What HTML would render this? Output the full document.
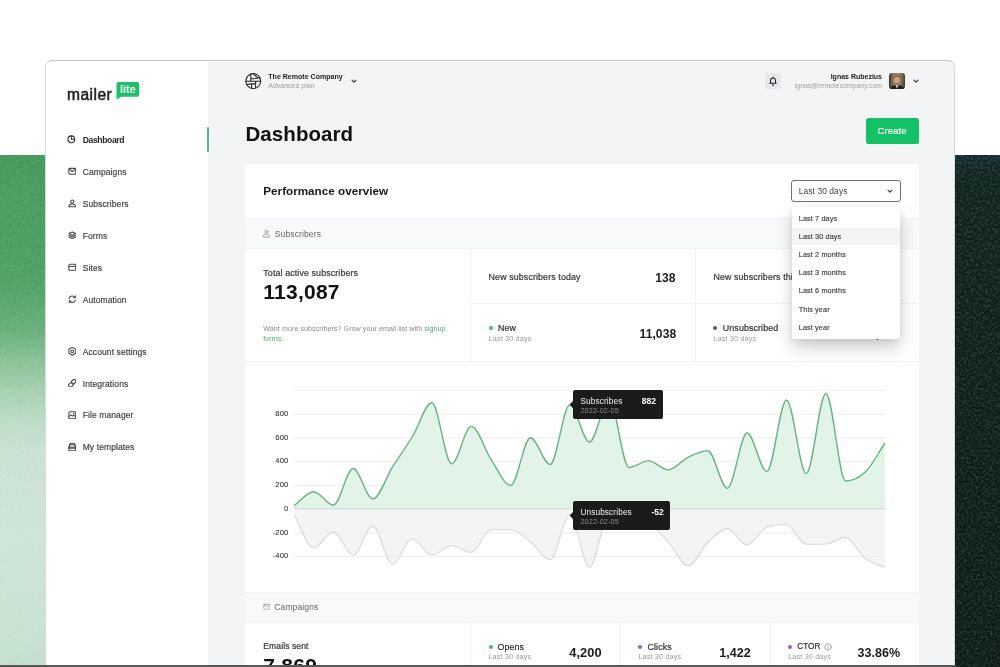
<!DOCTYPE html>
<html lang="en">
<head>
<meta charset="utf-8">
<title>Dashboard</title>
<style>
*{box-sizing:border-box;margin:0;padding:0}
html,body{width:1000px;height:667px;overflow:hidden;background:#fff}
body{position:relative;font-family:"Liberation Sans",sans-serif;color:#111;-webkit-font-smoothing:antialiased}
#root{position:absolute;left:0;top:0;width:1000px;height:667px;will-change:transform}
.abs{position:absolute}
.t{position:absolute;white-space:nowrap;line-height:1}
.b{font-weight:bold}
/* backgrounds */
#bgl{left:0;top:154.7px;width:60px;height:513px;background:linear-gradient(180deg,#41985a 0%,#4c9f63 24.5%,#66ae78 34%,#86c093 40%,#a3d0ae 46%,#bcdcc5 52%,#c9e1d1 58%,#cde4d6 75%,#c4e0cd 100%)}
#bgr{left:940px;top:154.7px;width:60px;height:513px;background:linear-gradient(180deg,#112a2b 0%,#0e201b 6%,#0c1b16 100%)}
#win{left:45px;top:60px;width:910px;height:620px;background:#f3f4f6;border:1px solid #d9d9dc;border-top-color:#c6c6c9;border-radius:6.5px;overflow:hidden}
#side{left:0;top:0;width:162px;height:620px;background:#fff}
#bline{left:0;top:665.4px;width:956px;height:1.6px;background:#565656}
/* sidebar */
.nav{position:absolute;left:82.7px;font-size:8.5px;line-height:12px;height:12px;color:#3d3d3d;white-space:nowrap;letter-spacing:.1px;-webkit-text-stroke:.16px #3d3d3d}
.nav.on{font-weight:bold;color:#262626;font-size:8.6px;margin-top:-.6px;letter-spacing:-.38px;-webkit-text-stroke:0}
.ico{position:absolute;left:67.55px;width:8.6px;height:8.6px;margin-top:.2px;fill:none;stroke:#454545;stroke-width:1.2;stroke-linecap:round;stroke-linejoin:round}
#actbar{left:207px;top:127.2px;width:1.5px;height:24.8px;background:#57b98b;border-radius:1px}

/* header */
#bell{left:764.9px;top:73px;width:16px;height:16px;background:#e6e8ec;border-radius:2.5px}
#avatar{left:889px;top:73px;width:16px;height:16px;border-radius:3px;overflow:hidden}
#create{left:865.6px;top:117.6px;width:53px;height:26.2px;background:#14c166;border-radius:2.5px;color:#effff6;font-size:9.5px;line-height:26.6px;text-align:center;letter-spacing:.12px;-webkit-text-stroke:.22px #effff6}
/* card */
#card{left:245px;top:163.5px;width:674px;height:520px;background:#fff;border-radius:4px 4px 0 0}
.band{position:absolute;left:245px;width:674px;background:#f8f9fb;border-top:1px solid #f1f2f5;border-bottom:1px solid #f1f2f5}
.vl{position:absolute;width:1px;background:#f0f1f3}
.hl{position:absolute;height:1px;background:#f0f1f3}
.lbl{font-size:8.85px;color:#3a3a3a;letter-spacing:.12px;-webkit-text-stroke:.22px #3a3a3a}
.sub{font-size:7.25px;color:#9a9a9a;letter-spacing:.15px}
.num{font-size:12.1px;font-weight:bold;color:#1c1c1c;letter-spacing:.05px}
.dot{position:absolute;width:4px;height:4px;border-radius:50%}
#sel{left:791px;top:180.1px;width:109.8px;height:21.8px;border:1px solid #6f6f6f;border-radius:3px;background:#fff}
#dd{left:792.2px;top:207px;width:107.8px;height:131.5px;background:#fff;border-radius:2px;box-shadow:0 9px 18px rgba(0,0,0,.19),0 2px 6px rgba(0,0,0,.07)}
.opt{position:absolute;left:6.6px;font-size:7.25px;line-height:10px;color:#3d3d3d;white-space:nowrap;letter-spacing:.12px;-webkit-text-stroke:.15px #3d3d3d}
.tip{background:#1b1b1b;border-radius:2px}
</style>
</head>
<body>
<div id="root">
<div id="bgl" class="abs"></div>
<div id="bgr" class="abs"></div>
<svg class="abs" style="left:0;top:154.7px" width="1000" height="513" viewBox="0 0 1000 513"><defs>
<filter id="nd" x="0" y="0" width="100%" height="100%"><feTurbulence type="fractalNoise" baseFrequency="0.42" numOctaves="2" seed="7"/><feColorMatrix type="matrix" values="0 0 0 0 0.27  0 0 0 0 0.38  0 0 0 0 0.34  2.0 0 0 0 -0.8"/></filter>
<filter id="nl" x="0" y="0" width="100%" height="100%"><feTurbulence type="fractalNoise" baseFrequency="1.1" numOctaves="2" seed="11"/><feColorMatrix type="matrix" values="0 0 0 0 1  0 0 0 0 1  0 0 0 0 1  1.4 0 0 0 -0.6"/></filter></defs>
<rect x="955" y="0" width="45" height="513" filter="url(#nd)" opacity=".3"/><rect x="0" y="0" width="46" height="513" filter="url(#nl)" opacity=".28"/></svg>
<div id="win" class="abs"><div id="side" class="abs"></div></div>

<!-- SIDEBAR -->
<div id="sidebar">
<div class="t" id="logo" style="left:67px;top:85.1px;font-size:15.6px;line-height:20px;color:#1d1d1d;letter-spacing:.45px;-webkit-text-stroke:.5px #1b1b1b">mailer</div>
<svg class="abs" id="lite" style="left:116px;top:81px" width="25" height="19" viewBox="0 0 25 19"><path d="M2.2 1H21.4a1.8 1.8 0 0 1 1.8 1.8V13.9a1.8 1.8 0 0 1-1.8 1.8H5.4L0.5 18.6V2.8A1.8 1.8 0 0 1 2.2 1z" fill="#1fc06a"/><text x="3.9" y="12.2" font-family="Liberation Sans, sans-serif" font-size="10.8" font-weight="bold" fill="#f4fff8" letter-spacing=".1">lite</text></svg>
<div id="actbar" class="abs"></div>
<svg class="ico" style="top:135.0px;left:67.3px;stroke:#2e2e2e" viewBox="0 0 10 10"><circle cx="5" cy="5" r="4"/><path d="M5 1V5H9"/></svg>
<svg class="ico" style="top:167.15px" viewBox="0 0 10 10"><rect x="1" y="1.6" width="8" height="6.8" rx="1.1"/><path d="M1.4 2.4L5 5.2L8.6 2.4"/></svg>
<svg class="ico" style="top:199.10px" viewBox="0 0 10 10"><circle cx="5" cy="3" r="1.95"/><path d="M1 9C1 6.5 2.8 5.9 5 5.9S9 6.5 9 9Z"/></svg>
<svg class="ico" style="top:230.80px" viewBox="0 0 10 10"><path d="M5 1.1L9 3L5 4.9L1 3ZM1 5L5 6.9L9 5M1 7L5 8.9L9 7"/></svg>
<svg class="ico" style="top:262.80px" viewBox="0 0 10 10"><rect x="1" y="1.5" width="8" height="7" rx="1.1"/><path d="M1 4H9"/></svg>
<svg class="ico" style="top:294.60px" viewBox="0 0 10 10"><path d="M1.3 4.3A3.8 3.8 0 0 1 8.2 2.9M8.7 5.7A3.8 3.8 0 0 1 1.8 7.1"/><path d="M8.8 0.9V3.4H6.3ZM1.2 9.1V6.6H3.7Z" fill="#444" stroke-width=".5"/></svg>
<svg class="ico" style="top:346.95px" viewBox="0 0 10 10"><path d="M5 0.4L9 2.7V7.3L5 9.6L1 7.3V2.7Z"/><circle cx="5" cy="5" r="1.55"/></svg>
<svg class="ico" style="top:378.60px" viewBox="0 0 10 10"><g transform="rotate(-40 5 5)" stroke-width="1.3"><rect x="-0.3" y="3.3" width="5.7" height="4.2" rx="2.1"/><rect x="4.6" y="2.5" width="5.7" height="4.2" rx="2.1"/></g></svg>
<svg class="ico" style="top:410.65px" viewBox="0 0 10 10"><rect x="1" y="0.9" width="8" height="8.2" rx="1.1"/><path d="M1.2 6.3L3.4 4.4L5.2 5.9L6.6 5.1L8.8 6.4"/><circle cx="6.7" cy="3.2" r=".4"/></svg>
<svg class="ico" style="top:442.65px" viewBox="0 0 10 10"><path d="M3.4 0.9H6.6Q7.7 0.9 8 2L9 5.8H1L2 2Q2.3 0.9 3.4 0.9Z" fill="#c4c4c4"/><path d="M3.4 0.9H6.6Q7.7 0.9 8 2L9 5.8V8.3Q9 9.1 8.2 9.1H1.8Q1 9.1 1 8.3V5.8L2 2Q2.3 0.9 3.4 0.9ZM1 5.8H9"/></svg>
<div class="nav on" style="top:134.5px">Dashboard</div>
<div class="nav" style="top:166.3px">Campaigns</div>
<div class="nav" style="top:198.1px">Subscribers</div>
<div class="nav" style="top:229.9px">Forms</div>
<div class="nav" style="top:261.7px">Sites</div>
<div class="nav" style="top:293.5px">Automation</div>
<div class="nav" style="top:345.7px">Account settings</div>
<div class="nav" style="top:377.5px">Integrations</div>
<div class="nav" style="top:409.3px">File manager</div>
<div class="nav" style="top:441.1px">My templates</div>
</div>


<!-- HEADER -->
<svg class="abs" id="globe" style="left:245px;top:73px" width="17" height="17" viewBox="0 0 17 17" fill="none" stroke="#222" stroke-width="1.05" stroke-linecap="round"><circle cx="8.25" cy="8.05" r="7.45"/><path d="M0.9 8.3H15.6M5.8 1.3V8.3M5.8 5.7Q11 5.7 15 4.7M8.8 1.2L12.6 4.9M10.6 8.3V15M1.8 11.6Q6 10.6 10.6 10.6M6.7 10.9V15.3"/></svg>
<div class="t b" style="left:268.3px;top:73.2px;font-size:7.05px;line-height:8px;color:#222">The Remote Company</div>
<div class="t" style="left:268.3px;top:82.4px;font-size:6.9px;line-height:8px;color:#9b9b9b;letter-spacing:.05px">Advanced plan</div>
<svg class="abs" style="left:350.5px;top:78.9px" width="6" height="5" viewBox="0 0 6 5" fill="none" stroke="#333" stroke-width="1.15" stroke-linecap="round" stroke-linejoin="round"><path d="M1 1.2L3 3.2L5 1.2"/></svg>
<div id="bell" class="abs"><svg width="16" height="16" viewBox="0 0 16 16" fill="none" stroke="#1f1f1f" stroke-width="1.05" stroke-linecap="round" stroke-linejoin="round"><path d="M5.5 10.3V7.5a2.5 2.5 0 0 1 5 0v2.8zM4.7 10.3H11.3M8 4.9V4.1"/><path d="M7.5 12.1h1" stroke-width="1.2"/></svg></div>
<div class="t b" style="right:118px;top:73px;font-size:7px;line-height:8px;color:#222">Ignas Rubezius</div>
<div class="t" style="right:118px;top:82px;font-size:6.85px;line-height:8px;color:#a0a0a0;letter-spacing:.02px">ignas@remotecompany.com</div>
<div id="avatar" class="abs"><svg width="16" height="16" viewBox="0 0 16 16"><defs><linearGradient id="avg" x1="0" x2="1" y1="0" y2="0"><stop offset="0" stop-color="#332d20"/><stop offset=".2" stop-color="#7d705a"/><stop offset=".5" stop-color="#9a8c74"/><stop offset=".8" stop-color="#7d705a"/><stop offset="1" stop-color="#3d3626"/></linearGradient></defs><rect width="16" height="16" fill="url(#avg)"/><ellipse cx="8" cy="4.9" rx="3.5" ry="3" fill="#9a683f"/><ellipse cx="8" cy="7.6" rx="2.9" ry="3.7" fill="#d3a187"/><path d="M5.2 8.6C5.6 12.4 10.4 12.4 10.8 8.6C9.8 10.4 6.2 10.4 5.2 8.6z" fill="#94684c" opacity=".8"/><path d="M0.8 16C1.8 12.6 4.6 12 6.4 12.2L8 14L9.6 12.2C11.4 12 14.2 12.6 15.2 16z" fill="#271f1a"/><path d="M6.5 12.1L8 15.6L9.5 12.1C9 12.8 7 12.8 6.5 12.1z" fill="#e6e2dd"/></svg></div>
<svg class="abs" style="left:912.5px;top:79.2px" width="6" height="5" viewBox="0 0 6 5" fill="none" stroke="#3a3a3a" stroke-width="1.15" stroke-linecap="round" stroke-linejoin="round"><path d="M1 1.2L3 3.2L5 1.2"/></svg>

<div class="t b" style="left:245.5px;top:122.1px;font-size:20.5px;line-height:24px;color:#111;letter-spacing:.07px">Dashboard</div>
<div id="create" class="abs">Create</div>

<!-- CARD -->
<div id="card" class="abs"></div>
<div class="t b" style="left:263.3px;top:184px;font-size:11.7px;line-height:14px;color:#1a1a1a">Performance overview</div>
<div class="band" style="top:218px;height:31px"></div>
<svg class="abs" style="left:262.4px;top:229.2px" width="8.8" height="8.8" viewBox="0 0 10 10" fill="none" stroke="#9a9a9a" stroke-width="1" stroke-linecap="round" stroke-linejoin="round"><circle cx="5" cy="3.2" r="1.75"/><path d="M1.4 8.7C1.4 6.5 3 5.9 5 5.9S8.6 6.5 8.6 8.7Z"/></svg>
<div class="t" style="left:274.8px;top:228.5px;font-size:8.5px;line-height:10px;color:#666;letter-spacing:.12px">Subscribers</div>

<div class="vl" style="left:470px;top:249px;height:112px"></div>
<div class="vl" style="left:695px;top:249px;height:112px"></div>
<div class="hl" style="left:470px;top:303px;width:449px"></div>
<div class="hl" style="left:245px;top:361px;width:674px"></div>

<div class="t lbl" style="left:263.3px;top:267.5px;line-height:10px">Total active subscribers</div>
<div class="t b" style="left:263.3px;top:280.2px;font-size:21px;line-height:24px;color:#111;letter-spacing:.25px">113,087</div>
<div class="t" style="left:263.3px;top:325.4px;font-size:7.15px;line-height:8px;color:#8a8a8a;letter-spacing:.05px">Want more subscribers? Grow your email list with <span style="color:#4da66e">signup</span></div>
<div class="t" style="left:263.3px;top:334.5px;font-size:7.15px;line-height:8px;color:#4da66e;letter-spacing:.05px">forms.</div>

<div class="t lbl" style="left:488.6px;top:271.5px;line-height:10px">New subscribers today</div>
<div class="t num" style="right:324.5px;top:270.8px;line-height:14px">138</div>
<div class="dot" style="left:488.8px;top:326px;background:#52b36c"></div>
<div class="t lbl" style="left:498px;top:323px;line-height:10px;color:#2c2c2c">New</div>
<div class="t sub" style="left:488.6px;top:335px;line-height:8px">Last 30 days</div>
<div class="t num" style="right:323.8px;top:326.5px;line-height:14px">11,038</div>

<div class="t lbl" style="left:713.4px;top:271.5px;line-height:10px">New subscribers this month</div>
<div class="dot" style="left:713.4px;top:326px;background:#5c5c5c"></div>
<div class="t lbl" style="left:722.8px;top:323px;line-height:10px;color:#2c2c2c">Unsubscribed</div>
<div class="t sub" style="left:713.4px;top:335px;line-height:8px">Last 30 days</div>
<div class="t num" style="right:100.6px;top:326.5px;line-height:14px">1,098</div>
<div class="t num" style="right:100.6px;top:270.8px;line-height:14px">4,531</div>

<!-- CHART placeholder -->
<!--CHARTSTART--><svg class="abs" id="chart" style="left:0;top:0" width="1000" height="667" viewBox="0 0 1000 667">
<g stroke="#f1f1f1" stroke-width="1"><line x1="294" x2="885" y1="390.50" y2="390.50"/><line x1="294" x2="885" y1="414.22" y2="414.22"/><line x1="294" x2="885" y1="437.94" y2="437.94"/><line x1="294" x2="885" y1="461.66" y2="461.66"/><line x1="294" x2="885" y1="485.38" y2="485.38"/><line x1="294" x2="885" y1="532.82" y2="532.82"/><line x1="294" x2="885" y1="556.54" y2="556.54"/></g>
<path d="M294.0 514.8C300.6 525.8 307.1 547.8 313.7 547.8C320.3 547.8 326.8 531.9 333.4 531.9C340.0 531.9 346.5 555.3 353.1 555.3C359.7 555.3 366.2 525.9 372.8 525.9C379.4 525.9 385.9 564.3 392.5 564.3C399.1 564.3 405.6 538.8 412.2 538.8C418.8 538.8 425.3 555.0 431.9 555.0C438.5 555.0 445.0 545.7 451.6 545.7C458.2 545.7 464.7 552.3 471.3 552.3C477.9 552.3 484.4 529.8 491.0 529.8C497.6 529.8 504.1 529.8 510.7 529.8C517.3 529.8 523.8 536.8 530.4 541.8C537.0 546.8 543.5 559.8 550.1 559.8C556.7 559.8 563.2 514.8 569.8 514.8C576.4 514.8 582.9 567.3 589.5 567.3C596.1 567.3 602.6 514.8 609.2 514.8C615.8 514.8 622.3 519.6 628.9 520.8C635.5 522.0 642.0 521.0 648.6 523.8C655.2 526.6 661.7 534.8 668.3 541.8C674.9 548.8 681.4 565.8 688.0 565.8C694.6 565.8 701.1 548.7 707.7 542.5C714.3 536.3 720.8 528.6 727.4 528.6C734.0 528.6 740.5 545.0 747.1 545.0C753.7 545.0 760.2 529.5 766.8 527.0C773.4 524.5 779.9 524.5 786.5 524.5C793.1 524.5 799.6 544.3 806.2 544.3C812.8 544.3 819.3 544.3 825.9 544.0C832.5 543.7 839.0 537.4 845.6 537.4C852.2 537.4 858.7 553.4 865.3 558.4C871.9 563.4 878.4 564.4 885.0 567.4L885 508.8L294 508.8Z" fill="#f4f4f6"/>
<path d="M294.0 505.8C300.6 501.1 307.1 491.8 313.7 491.8C320.3 491.8 326.8 505.2 333.4 505.2C340.0 505.2 346.5 468.5 353.1 468.5C359.7 468.5 366.2 499.0 372.8 499.0C379.4 499.0 385.9 477.2 392.5 466.9C399.1 456.6 405.6 447.7 412.2 437.0C418.8 426.3 425.3 402.8 431.9 402.8C438.5 402.8 445.0 463.9 451.6 463.9C458.2 463.9 464.7 426.4 471.3 426.4C477.9 426.4 484.4 449.5 491.0 459.4C497.6 469.2 504.1 485.5 510.7 485.5C517.3 485.5 523.8 437.8 530.4 437.8C537.0 437.8 543.5 464.5 550.1 464.5C556.7 464.5 563.2 404.9 569.8 404.9C576.4 404.9 582.9 442.0 589.5 442.0C596.1 442.0 602.6 399.5 609.2 399.5C615.8 399.5 622.3 467.5 628.9 467.5C635.5 467.5 642.0 460.9 648.6 460.9C655.2 460.9 661.7 469.9 668.3 469.9C674.9 469.9 681.4 460.5 688.0 457.3C694.6 454.1 701.1 450.7 707.7 450.7C714.3 450.7 720.8 488.2 727.4 488.2C734.0 488.2 740.5 433.0 747.1 433.0C753.7 433.0 760.2 471.5 766.8 471.5C773.4 471.5 779.9 400.0 786.5 400.0C793.1 400.0 799.6 473.6 806.2 473.6C812.8 473.6 819.3 393.5 825.9 393.5C832.5 393.5 839.0 481.0 845.6 481.0C852.2 481.0 858.7 478.3 865.3 472.0C871.9 465.7 878.4 452.7 885.0 443.0L885 508.8L294 508.8Z" fill="#e2f4e7"/>
<g stroke="#ececec" stroke-width="1" opacity=".55"><line x1="294" x2="885" y1="390.50" y2="390.50"/><line x1="294" x2="885" y1="414.22" y2="414.22"/><line x1="294" x2="885" y1="437.94" y2="437.94"/><line x1="294" x2="885" y1="461.66" y2="461.66"/><line x1="294" x2="885" y1="485.38" y2="485.38"/><line x1="294" x2="885" y1="532.82" y2="532.82"/><line x1="294" x2="885" y1="556.54" y2="556.54"/></g>
<line x1="294" x2="885" y1="508.8" y2="508.8" stroke="#c9dccf" stroke-width="1"/>
<path d="M294.0 514.8C300.6 525.8 307.1 547.8 313.7 547.8C320.3 547.8 326.8 531.9 333.4 531.9C340.0 531.9 346.5 555.3 353.1 555.3C359.7 555.3 366.2 525.9 372.8 525.9C379.4 525.9 385.9 564.3 392.5 564.3C399.1 564.3 405.6 538.8 412.2 538.8C418.8 538.8 425.3 555.0 431.9 555.0C438.5 555.0 445.0 545.7 451.6 545.7C458.2 545.7 464.7 552.3 471.3 552.3C477.9 552.3 484.4 529.8 491.0 529.8C497.6 529.8 504.1 529.8 510.7 529.8C517.3 529.8 523.8 536.8 530.4 541.8C537.0 546.8 543.5 559.8 550.1 559.8C556.7 559.8 563.2 514.8 569.8 514.8C576.4 514.8 582.9 567.3 589.5 567.3C596.1 567.3 602.6 514.8 609.2 514.8C615.8 514.8 622.3 519.6 628.9 520.8C635.5 522.0 642.0 521.0 648.6 523.8C655.2 526.6 661.7 534.8 668.3 541.8C674.9 548.8 681.4 565.8 688.0 565.8C694.6 565.8 701.1 548.7 707.7 542.5C714.3 536.3 720.8 528.6 727.4 528.6C734.0 528.6 740.5 545.0 747.1 545.0C753.7 545.0 760.2 529.5 766.8 527.0C773.4 524.5 779.9 524.5 786.5 524.5C793.1 524.5 799.6 544.3 806.2 544.3C812.8 544.3 819.3 544.3 825.9 544.0C832.5 543.7 839.0 537.4 845.6 537.4C852.2 537.4 858.7 553.4 865.3 558.4C871.9 563.4 878.4 564.4 885.0 567.4" fill="none" stroke="#d8d8da" stroke-width="1.1"/>
<path d="M294.0 505.8C300.6 501.1 307.1 491.8 313.7 491.8C320.3 491.8 326.8 505.2 333.4 505.2C340.0 505.2 346.5 468.5 353.1 468.5C359.7 468.5 366.2 499.0 372.8 499.0C379.4 499.0 385.9 477.2 392.5 466.9C399.1 456.6 405.6 447.7 412.2 437.0C418.8 426.3 425.3 402.8 431.9 402.8C438.5 402.8 445.0 463.9 451.6 463.9C458.2 463.9 464.7 426.4 471.3 426.4C477.9 426.4 484.4 449.5 491.0 459.4C497.6 469.2 504.1 485.5 510.7 485.5C517.3 485.5 523.8 437.8 530.4 437.8C537.0 437.8 543.5 464.5 550.1 464.5C556.7 464.5 563.2 404.9 569.8 404.9C576.4 404.9 582.9 442.0 589.5 442.0C596.1 442.0 602.6 399.5 609.2 399.5C615.8 399.5 622.3 467.5 628.9 467.5C635.5 467.5 642.0 460.9 648.6 460.9C655.2 460.9 661.7 469.9 668.3 469.9C674.9 469.9 681.4 460.5 688.0 457.3C694.6 454.1 701.1 450.7 707.7 450.7C714.3 450.7 720.8 488.2 727.4 488.2C734.0 488.2 740.5 433.0 747.1 433.0C753.7 433.0 760.2 471.5 766.8 471.5C773.4 471.5 779.9 400.0 786.5 400.0C793.1 400.0 799.6 473.6 806.2 473.6C812.8 473.6 819.3 393.5 825.9 393.5C832.5 393.5 839.0 481.0 845.6 481.0C852.2 481.0 858.7 478.3 865.3 472.0C871.9 465.7 878.4 452.7 885.0 443.0" fill="none" stroke="#68b382" stroke-width="1.4"/>
<g font-family="Liberation Sans, sans-serif" font-size="7.7" fill="#3c3c3c" stroke="#3c3c3c" stroke-width=".12"><text x="288.2" y="415.97" text-anchor="end">800</text><text x="288.2" y="439.69" text-anchor="end">600</text><text x="288.2" y="463.41" text-anchor="end">400</text><text x="288.2" y="487.13" text-anchor="end">200</text><text x="288.2" y="510.85" text-anchor="end">0</text><text x="288.2" y="534.57" text-anchor="end">-200</text><text x="288.2" y="558.29" text-anchor="end">-400</text></g>
</svg>
<div class="abs tip" style="left:573.2px;top:390.4px;width:89.4px;height:28.9px"></div>
<svg class="abs" style="left:569.3px;top:400.4px" width="5" height="9" viewBox="0 0 5 9"><path d="M5 0L0.6 4.5L5 9z" fill="#1b1b1b"/></svg>
<div class="t" style="left:580.4px;top:396px;font-size:8.3px;line-height:10px;color:#f0f0f0;letter-spacing:.1px">Subscribes</div>
<div class="t b" style="right:344px;top:396px;font-size:8.5px;line-height:10px;color:#fff">882</div>
<div class="t" style="left:580.4px;top:406.8px;font-size:7.3px;line-height:8px;color:#8b8b8b;letter-spacing:.12px">2022-02-05</div>
<div class="abs tip" style="left:573.2px;top:500.8px;width:96.7px;height:29.3px"></div>
<svg class="abs" style="left:569.3px;top:511px" width="5" height="9" viewBox="0 0 5 9"><path d="M5 0L0.6 4.5L5 9z" fill="#1b1b1b"/></svg>
<div class="t" style="left:580.4px;top:506.8px;font-size:8.3px;line-height:10px;color:#f0f0f0;letter-spacing:.1px">Unsubscribes</div>
<div class="t b" style="right:336.2px;top:506.8px;font-size:8.5px;line-height:10px;color:#fff">-52</div>
<div class="t" style="left:580.4px;top:517.6px;font-size:7.3px;line-height:8px;color:#8b8b8b;letter-spacing:.12px">2022-02-05</div>
<!--CHARTEND-->

<!-- CAMPAIGNS -->
<div class="band" style="top:591.5px;height:31.5px"></div>
<svg class="abs" style="left:262.9px;top:603.2px" width="7.6" height="7.6" viewBox="0 0 10 10" fill="none" stroke="#9a9a9a" stroke-width="1" stroke-linecap="round" stroke-linejoin="round"><rect x="1" y="1.8" width="8" height="6.4" rx="1"/><path d="M1.4 2.5L5 5.1L8.6 2.5"/></svg>
<div class="t" style="left:274.3px;top:602px;font-size:8.5px;line-height:10px;color:#666;letter-spacing:.12px">Campaigns</div>
<div class="vl" style="left:469.5px;top:623px;height:50px"></div>
<div class="vl" style="left:619.5px;top:623px;height:50px"></div>
<div class="vl" style="left:769.5px;top:623px;height:50px"></div>
<div class="t lbl" style="left:263.3px;top:641.4px;line-height:10px;font-size:8.5px">Emails sent</div>
<div class="t b" style="left:263.3px;top:654px;font-size:21px;line-height:24px;color:#111;letter-spacing:.25px">7,869</div>

<div class="dot" style="left:488.8px;top:644.7px;background:#52b36c"></div>
<div class="t lbl" style="left:497.5px;top:641.6px;line-height:10px;color:#2c2c2c">Opens</div>
<div class="t sub" style="left:488.4px;top:652.8px;line-height:8px">Last 30 days</div>
<div class="t num" style="right:398.3px;top:645.9px;line-height:14px;font-size:12.9px">4,200</div>

<div class="dot" style="left:638.4px;top:644.7px;background:#4a7fe0"></div>
<div class="t lbl" style="left:647.5px;top:641.6px;line-height:10px;color:#2c2c2c">Clicks</div>
<div class="t sub" style="left:638.4px;top:652.8px;line-height:8px">Last 30 days</div>
<div class="t num" style="right:249.3px;top:645.9px;line-height:14px;font-size:12.5px">1,422</div>

<div class="dot" style="left:788.2px;top:644.7px;background:#9065d3"></div>
<div class="t lbl" style="left:797.3px;top:641.6px;line-height:10px;color:#2c2c2c;font-size:8.2px;letter-spacing:0">CTOR</div>
<svg class="abs" style="left:823.8px;top:642.6px" width="8" height="8" viewBox="0 0 8 8" fill="none" stroke="#888" stroke-width=".7" stroke-linecap="round"><circle cx="4" cy="4" r="3.3"/><path d="M4 3.7V5.7M4 2.4V2.5"/></svg>
<div class="t sub" style="left:788.2px;top:652.8px;line-height:8px">Last 30 days</div>
<div class="t num" style="right:99.8px;top:645.9px;line-height:14px;font-size:12.5px">33.86%</div>

<!-- SELECT + DROPDOWN -->
<div id="sel" class="abs"></div>
<div class="t" style="left:798.7px;top:186.3px;font-size:8.45px;line-height:10px;color:#444;letter-spacing:.08px">Last 30 days</div>
<svg class="abs" style="left:886.8px;top:189px" width="6" height="5" viewBox="0 0 6 5" fill="none" stroke="#3a3a3a" stroke-width="1.1" stroke-linecap="round" stroke-linejoin="round"><path d="M1 1.2L3 3.2L5 1.2"/></svg>
<div id="dd" class="abs">
<div class="abs" style="left:0;top:20.7px;width:107.8px;height:17.6px;background:#f3f4f6"></div>
<div class="opt" style="top:7.1px">Last 7 days</div>
<div class="opt" style="top:24.5px">Last 30 days</div>
<div class="opt" style="top:42.6px">Last 2 months</div>
<div class="opt" style="top:60.8px">Last 3 months</div>
<div class="opt" style="top:79.3px">Last 6 months</div>
<div class="opt" style="top:97.8px">This year</div>
<div class="opt" style="top:116.1px">Last year</div>
</div>

<div id="bline" class="abs"></div>
</div>
</body>
</html>
